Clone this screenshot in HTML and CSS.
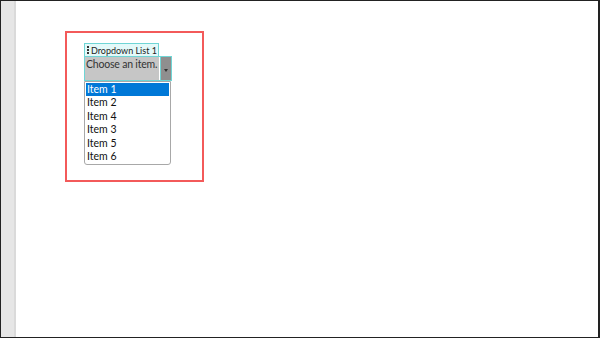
FILE: index.html
```html
<!DOCTYPE html>
<html>
<head>
<meta charset="utf-8">
<link rel="stylesheet" href="styles.css">
</head>
<body>
<div class="frame">
  <div class="gutter"><div class="gutter-edge"></div></div>
  <div class="page">
    <div class="highlight">
      <div class="control">
        <div class="tag"><span class="handle"><i></i><i></i><i></i></span><span class="tag-text">Dropdown List 1</span></div>
        <div class="combo">
          <div class="combo-text">Choose an item.</div>
          <div class="combo-btn"><span class="arrow"></span></div>
        </div>
        <ul class="list">
          <li class="sel">Item 1</li>
          <li>Item 2</li>
          <li>Item 4</li>
          <li>Item 3</li>
          <li>Item 5</li>
          <li>Item 6</li>
        </ul>
      </div>
    </div>
  </div>
</div>
</body>
</html>
```

FILE: styles.css
```css
html, body {
  margin: 0;
  padding: 0;
  width: 600px;
  height: 338px;
  overflow: hidden;
  background: #ffffff;
}
.frame {
  box-sizing: border-box;
  width: 600px;
  height: 338px;
  border: 1px solid #222222;
  border-right-width: 2px;
  display: flex;
  font-family: Lato, "Open Sans", sans-serif;
}
.gutter {
  width: 15px;
  background: #e6e6e6;
  display: flex;
  justify-content: flex-end;
}
.gutter-edge {
  width: 2px;
  background: #dadada;
}
.page {
  flex: 1;
  background: #ffffff;
  padding: 30px 0 0 49px;
}
.highlight {
  box-sizing: border-box;
  width: 139px;
  height: 151px;
  border: 2px solid #f35a5a;
  padding: 10px 0 0 17px;
}
.control {
  display: flex;
  flex-direction: column;
  align-items: flex-start;
}
.tag {
  box-sizing: border-box;
  height: 13px;
  width: 75px;
  border: 1px solid #6fd5d5;
  border-bottom: none;
  background: #e3f9f9;
  display: flex;
  align-items: center;
  padding-left: 2px;
  font-size: 9px;
  color: #222222;
  line-height: 1;
}
.handle {
  display: flex;
  flex-direction: column;
  gap: 1px;
  margin-right: 2px;
}
.handle i {
  display: block;
  width: 2px;
  height: 2px;
  background: #333333;
}
.combo {
  box-sizing: border-box;
  width: 88px;
  height: 25px;
  border: 1px solid #6fd5d5;
  display: flex;
}
.combo-text {
  width: 73px;
  background: #c6c6c6;
  color: #333333;
  font-size: 10.5px;
  letter-spacing: -0.2px;
  line-height: 14px;
  padding-left: 1px;
  white-space: nowrap;
  overflow: hidden;
}
.combo-btn {
  box-sizing: border-box;
  flex: 1;
  background: #8f8f8f;
  border-left: 1px solid #6fd5d5;
  margin-left: 1px;
  display: flex;
  align-items: center;
  justify-content: center;
}
.arrow {
  width: 0;
  height: 0;
  border-left: 2.5px solid transparent;
  border-right: 2.5px solid transparent;
  border-top: 3px solid #333333;
  margin-top: 3px;
}
.list {
  list-style: none;
  margin: 0;
  padding: 1px;
  box-sizing: border-box;
  width: 87px;
  border: 1px solid #a8a8a8;
  border-radius: 0 0 3px 3px;
  background: #ffffff;
}
.list li {
  height: 13.4px;
  line-height: 13.4px;
  font-size: 10.5px;
  color: #111111;
  padding-left: 1px;
}
.list li.sel {
  background: #0078d7;
  color: #ffffff;
}
```
